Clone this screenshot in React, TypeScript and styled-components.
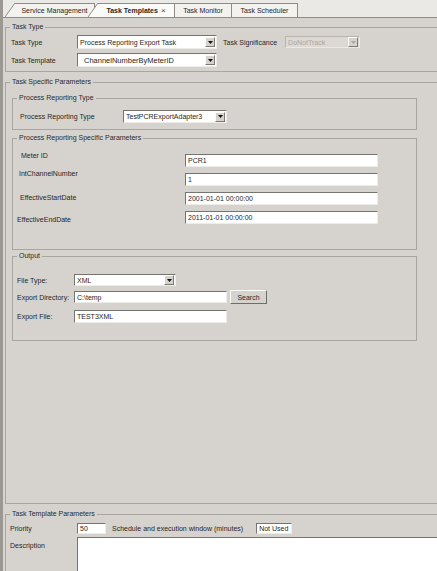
import React from "react";
import styled, { createGlobalStyle } from "styled-components";

const GlobalStyle = createGlobalStyle`
  html, body {
    margin: 0;
    padding: 0;
  }
  body {
    background: #d6d3ce;
    font-family: "Liberation Sans", Arial, sans-serif;
    font-size: 7px;
    color: #262626;
    overflow: hidden;
  }
`;

const Window = styled.div`
  display: flex;
  flex-direction: column;
  width: 437px;
  height: 571px;
  box-sizing: border-box;
  overflow: hidden;
  border-left: 3px solid #9b9893;
  background: #d6d3ce;
`;

/* ---------- tabs ---------- */

const TabBar = styled.div`
  display: flex;
  align-items: flex-end;
  flex: 0 0 auto;
  height: 17px;
  padding-left: 2px;
  border-bottom: 1px solid #8e8c88;
  background: #ebe9e5;
`;

const Tab = styled.div<{ $active?: boolean; $overlap?: number }>`
  display: flex;
  align-items: flex-end;
  height: 15px;
  margin-left: ${(p) => (p.$overlap ? -p.$overlap : 0)}px;
  z-index: ${(p) => (p.$active ? 2 : 1)};
`;

const TabBody = styled.div<{ $active?: boolean; $w: number }>`
  display: flex;
  align-items: center;
  justify-content: center;
  gap: 3px;
  box-sizing: border-box;
  width: ${(p) => p.$w}px;
  height: 14px;
  border-top: 1px solid #8e8c88;
  border-right: 1px solid #8e8c88;
  background: ${(p) => (p.$active ? "#fafaf8" : "#f3f2ef")};
  font-weight: ${(p) => (p.$active ? 700 : 400)};
  font-size: 7px;
  white-space: nowrap;
`;

const Slant: React.FC<{ active?: boolean }> = ({ active }) => (
  <svg width="10" height="14" viewBox="0 0 10 14" style={{ display: "block" }}>
    <polygon points="0,14 10,0 10,14" fill={active ? "#fafaf8" : "#f3f2ef"} />
    <line x1="0" y1="14" x2="10" y2="0" stroke="#8e8c88" strokeWidth="1" />
  </svg>
);

const Close = styled.span`
  font-weight: 400;
  font-size: 8px;
  color: #444;
`;

/* ---------- group boxes ---------- */

const Fieldset = styled.fieldset<{
  $pad: number;
  $top: number;
  $bottom: number;
  $mt: number;
  $ml: number;
  $w?: number;
  $h?: number;
}>`
  flex: 0 0 auto;
  box-sizing: border-box;
  margin: ${(p) => p.$mt}px 0 0 ${(p) => p.$ml}px;
  padding: ${(p) => p.$top}px 0 ${(p) => p.$bottom}px ${(p) => p.$pad}px;
  min-width: 0;
  width: ${(p) => (p.$w ? `${p.$w}px` : "auto")};
  height: ${(p) => (p.$h ? `${p.$h}px` : "auto")};
  border: 1px solid #a9a6a0;
  display: flex;
  flex-direction: column;
`;

const Legend = styled.legend<{ $pad: number }>`
  margin-left: ${(p) => 4 - p.$pad}px;
  padding: 0 2px;
  font-size: 7px;
  line-height: 8px;
  color: #2a2a2a;
`;

type GroupProps = {
  title: string;
  pad: number;
  top: number;
  bottom: number;
  mt: number;
  ml: number;
  w?: number;
  h?: number;
  children?: React.ReactNode;
};

const Group: React.FC<GroupProps> = ({ title, pad, top, bottom, mt, ml, w, h, children }) => (
  <Fieldset $pad={pad} $top={top} $bottom={bottom} $mt={mt} $ml={ml} $w={w} $h={h}>
    <Legend $pad={pad}>{title}</Legend>
    {children}
  </Fieldset>
);

const OuterWrap = styled.div`
  display: flex;
  flex-direction: column;
  margin-right: -40px;
`;

/* ---------- rows and fields ---------- */

const Row = styled.div<{ $gap?: number; $align?: string }>`
  display: flex;
  align-items: ${(p) => p.$align || "center"};
  margin-top: ${(p) => p.$gap || 0}px;
`;

const Label = styled.div<{ $w: number; $indent?: number; $dy?: number }>`
  flex: 0 0 auto;
  box-sizing: border-box;
  width: ${(p) => p.$w}px;
  padding-left: ${(p) => p.$indent || 0}px;
  margin-top: ${(p) => p.$dy || 0}px;
  font-size: 7px;
  line-height: 9px;
  white-space: nowrap;
`;

const Text = styled.span<{ $ml?: number }>`
  margin-left: ${(p) => p.$ml || 0}px;
  font-size: 7px;
  white-space: nowrap;
`;

const Field = styled.div<{ $w: number; $h: number; $ml?: number }>`
  display: flex;
  align-items: center;
  flex: 0 0 auto;
  box-sizing: border-box;
  width: ${(p) => p.$w}px;
  height: ${(p) => p.$h}px;
  margin-left: ${(p) => p.$ml || 0}px;
  padding-left: 2px;
  border: 1px solid;
  border-color: #76746f #eeece9 #eeece9 #76746f;
  background: #fff;
  font-size: 7px;
  white-space: nowrap;
  overflow: hidden;
`;

const SelectBox = styled.div<{
  $w: number;
  $h: number;
  $disabled?: boolean;
  $size?: number;
  $indent?: number;
  $ml?: number;
}>`
  display: flex;
  align-items: center;
  justify-content: space-between;
  flex: 0 0 auto;
  box-sizing: border-box;
  width: ${(p) => p.$w}px;
  height: ${(p) => p.$h}px;
  margin-left: ${(p) => p.$ml || 0}px;
  padding: 0 1px 0 ${(p) => p.$indent ?? 2}px;
  border: 1px solid;
  border-color: ${(p) =>
    p.$disabled ? "#b7b4ae #ebe9e5 #ebe9e5 #b7b4ae" : "#76746f #eeece9 #eeece9 #76746f"};
  background: ${(p) => (p.$disabled ? "#dcd9d4" : "#fff")};
  color: ${(p) => (p.$disabled ? "#aaa7a1" : "#262626")};
  font-size: ${(p) => p.$size || 7}px;
  white-space: nowrap;
`;

const DropButton = styled.div<{ $disabled?: boolean }>`
  display: flex;
  align-items: center;
  justify-content: center;
  box-sizing: border-box;
  width: 10px;
  height: 10px;
  border: 1px solid;
  border-color: #fbfbfa #7c7a76 #7c7a76 #fbfbfa;
  background: #d6d3ce;
  color: ${(p) => (p.$disabled ? "#a9a6a0" : "#111")};
`;

const Select: React.FC<{
  w: number;
  h: number;
  value: string;
  disabled?: boolean;
  size?: number;
  indent?: number;
  ml?: number;
}> = ({ w, h, value, disabled, size, indent, ml }) => (
  <SelectBox $w={w} $h={h} $disabled={disabled} $size={size} $indent={indent} $ml={ml}>
    <span>{value}</span>
    <DropButton $disabled={disabled}>
      <svg width="5" height="3" viewBox="0 0 5 3">
        <polygon points="0,0 5,0 2.5,3" fill="currentColor" />
      </svg>
    </DropButton>
  </SelectBox>
);

const Button = styled.div`
  display: flex;
  align-items: center;
  justify-content: center;
  box-sizing: border-box;
  width: 37px;
  height: 14px;
  margin-left: 3px;
  border: 1px solid;
  border-color: #fbfbfa #6f6d69 #6f6d69 #fbfbfa;
  background: #d6d3ce;
  font-size: 7px;
`;

const TextArea = styled.div`
  box-sizing: border-box;
  width: 380px;
  height: 60px;
  border: 1px solid;
  border-color: #76746f #eeece9 #eeece9 #76746f;
  background: #fff;
`;

export default function App() {
  return (
    <>
      <GlobalStyle />
      <Window>
        <TabBar>
          <Tab>
            <Slant />
            <TabBody $w={80}>Service Management</TabBody>
          </Tab>
          <Tab $active $overlap={7}>
            <Slant active />
            <TabBody $w={77} $active>
              Task Templates <Close>×</Close>
            </TabBody>
          </Tab>
          <Tab>
            <TabBody $w={57}>Task Monitor</TabBody>
          </Tab>
          <Tab>
            <TabBody $w={66}>Task Scheduler</TabBody>
          </Tab>
        </TabBar>

        <OuterWrap>
          <Group title="Task Type" pad={5} top={4} bottom={4} mt={5} ml={2}>
            <Row>
              <Label $w={66}>Task Type</Label>
              <Select w={140} h={14} value="Process Reporting Export Task" />
              <Text $ml={6}>Task Significance</Text>
              <Select w={75} h={12} value="DoNotTrack" disabled ml={8} />
            </Row>
            <Row $gap={4}>
              <Label $w={66} $dy={1}>Task Template</Label>
              <Select w={140} h={14} value="ChannelNumberByMeterID" size={7.5} indent={6} />
            </Row>
          </Group>

          <Group title="Task Specific Parameters" pad={6} top={8} bottom={0} mt={6} ml={2} h={426}>
            <Group title="Process Reporting Type" pad={7} top={8} bottom={6} mt={0} ml={0} w={405}>
              <Row>
                <Label $w={103}>Process Reporting Type</Label>
                <Select w={104} h={13} value="TestPCRExportAdapter3" />
              </Row>
            </Group>

            <Group
              title="Process Reporting Specific Parameters"
              pad={4}
              top={12}
              bottom={25}
              mt={4}
              ml={0}
              w={405}
            >
              <Row $align="flex-start">
                <Label $w={168} $indent={4} $dy={-3}>Meter ID</Label>
                <Field $w={193} $h={13}>PCR1</Field>
              </Row>
              <Row $align="flex-start" $gap={6}>
                <Label $w={168} $indent={2} $dy={-4}>IntChannelNumber</Label>
                <Field $w={193} $h={13}>1</Field>
              </Row>
              <Row $align="flex-start" $gap={6}>
                <Label $w={168} $indent={3} $dy={1}>EffectiveStartDate</Label>
                <Field $w={193} $h={13}>2001-01-01 00:00:00</Field>
              </Row>
              <Row $align="flex-start" $gap={6}>
                <Label $w={168} $indent={0} $dy={4}>EffectiveEndDate</Label>
                <Field $w={193} $h={13}>2011-01-01 00:00:00</Field>
              </Row>
            </Group>

            <Group title="Output" pad={4} top={14} bottom={17} mt={2} ml={0} w={405}>
              <Row>
                <Label $w={57}>File Type:</Label>
                <Select w={102} h={12} value="XML" />
              </Row>
              <Row $gap={4}>
                <Label $w={57}>Export Directory:</Label>
                <Field $w={153} $h={12}>C:\temp</Field>
                <Button>Search</Button>
              </Row>
              <Row $gap={6}>
                <Label $w={57}>Export File:</Label>
                <Field $w={153} $h={13}>TEST3XML</Field>
              </Row>
            </Group>
          </Group>

          <Group title="Task Template Parameters" pad={4} top={5} bottom={4} mt={6} ml={2}>
            <Row>
              <Label $w={67}>Priority</Label>
              <Field $w={29} $h={11}>50</Field>
              <Text $ml={6}>Schedule and execution window (minutes)</Text>
              <Field $w={36} $h={11} $ml={13}>Not Used</Field>
            </Row>
            <Row $align="flex-start" $gap={3}>
              <Label $w={67} $dy={4}>Description</Label>
              <TextArea />
            </Row>
          </Group>
        </OuterWrap>
      </Window>
    </>
  );
}
